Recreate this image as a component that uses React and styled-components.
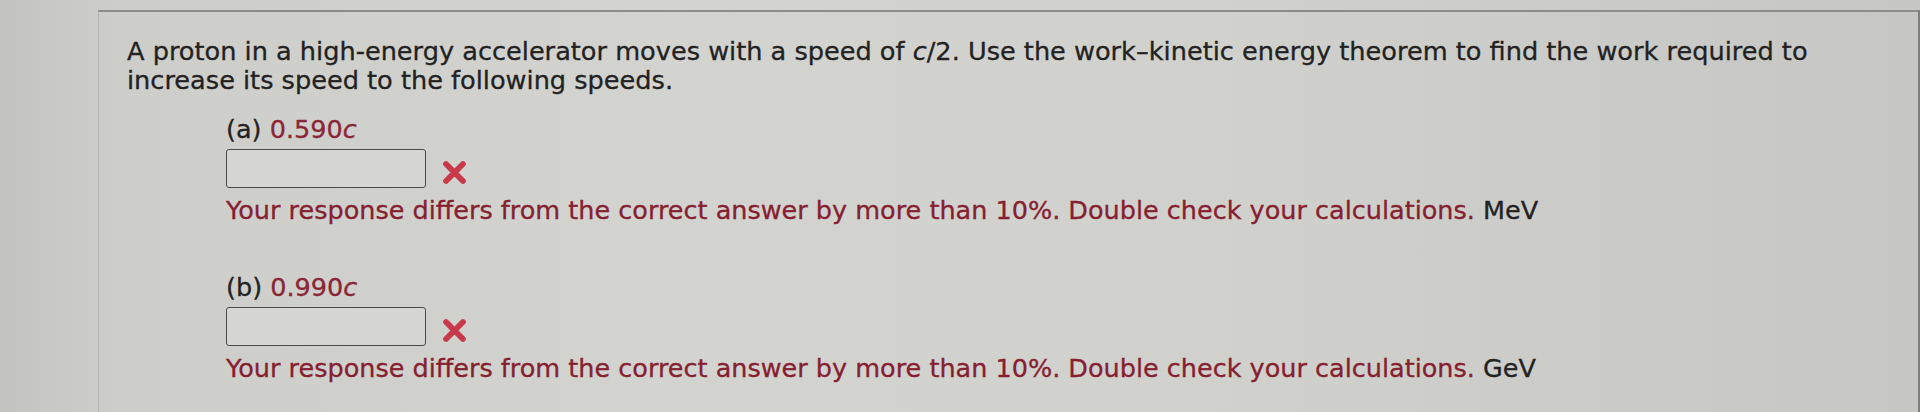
import React from 'react'
import styled, { createGlobalStyle } from 'styled-components'

const GlobalStyle = createGlobalStyle`
  html, body {
    margin: 0;
    padding: 0;
  }
  body {
    background: #cbcbc8;
    font-family: "DejaVu Sans", Verdana, sans-serif;
  }
`

const parts = [
  { id: 'a', speed: '0.590', unit: 'MeV' },
  { id: 'b', speed: '0.990', unit: 'GeV' },
]

const App = () => {
  return (
    <Page>
      <GlobalStyle />
      <Panel>
        <Question>
          A proton in a high-energy accelerator moves with a speed of <Var>c</Var>/2. Use the
          work&ndash;kinetic energy theorem to find the work required to increase its speed to
          the following speeds.
        </Question>
        <Parts>
          {parts.map((p) => (
            <Part key={p.id}>
              <Label>
                ({p.id}) <Given>{p.speed}<Var>c</Var></Given>
              </Label>
              <AnswerRow>
                <AnswerBox type="text" />
                <WrongMark viewBox="0 0 24 24">
                  <path d="M5 5 L19 19 M19 5 L5 19" />
                </WrongMark>
              </AnswerRow>
              <Feedback>
                <ErrorText>
                  Your response differs from the correct answer by more than 10%. Double check
                  your calculations.
                </ErrorText>{' '}
                {p.unit}
              </Feedback>
            </Part>
          ))}
        </Parts>
      </Panel>
    </Page>
  )
}

export default App

const Page = styled.div`
  height: 412px;
  width: 1920px;
  overflow: hidden;
  display: flex;
  background: linear-gradient(90deg, #c3c3c1 0%, #cdcdca 6%, #d3d3d0 35%, #d0d0cd 65%, #c6c6c4 100%);
`

const Panel = styled.div`
  margin: 10px 0 0 98px;
  width: 1798px;
  border-top: 2px solid #8c8c8c;
  border-left: 1px solid #b4b4b2;
  border-right: 2px solid #7d7d7d;
  padding: 25px 0 0 28px;
  color: #222;
  -webkit-text-stroke: 0.3px currentColor;
`

const Question = styled.div`
  font-size: 25.6px;
  line-height: 29px;
  width: 1720px;
`

const Var = styled.i`
  font-style: italic;
`

const Parts = styled.div`
  margin-left: 99px;
  margin-top: 20px;
  display: flex;
  flex-direction: column;
  gap: 48px;
`

const Part = styled.div`
  display: flex;
  flex-direction: column;
`

const Label = styled.div`
  font-size: 25.5px;
  line-height: 29px;
`

const Given = styled.span`
  color: #8a2636;
`

const AnswerRow = styled.div`
  display: flex;
  align-items: center;
  margin-top: 5px;
`

const AnswerBox = styled.input`
  width: 200px;
  height: 39px;
  box-sizing: border-box;
  border: 1.5px solid #4a4a4a;
  border-radius: 3px;
  background: #d6d6d3;
  outline: none;
  margin: 0;
`

const WrongMark = styled.svg`
  width: 29px;
  height: 29px;
  margin: 7px 0 0 14px;
  fill: none;
  stroke: #c83a4a;
  stroke-width: 4.8;
  stroke-linecap: round;
`

const Feedback = styled.div`
  font-size: 25.5px;
  line-height: 29px;
  margin-top: 8px;
  color: #222;
`

const ErrorText = styled.span`
  color: #86202f;
`
